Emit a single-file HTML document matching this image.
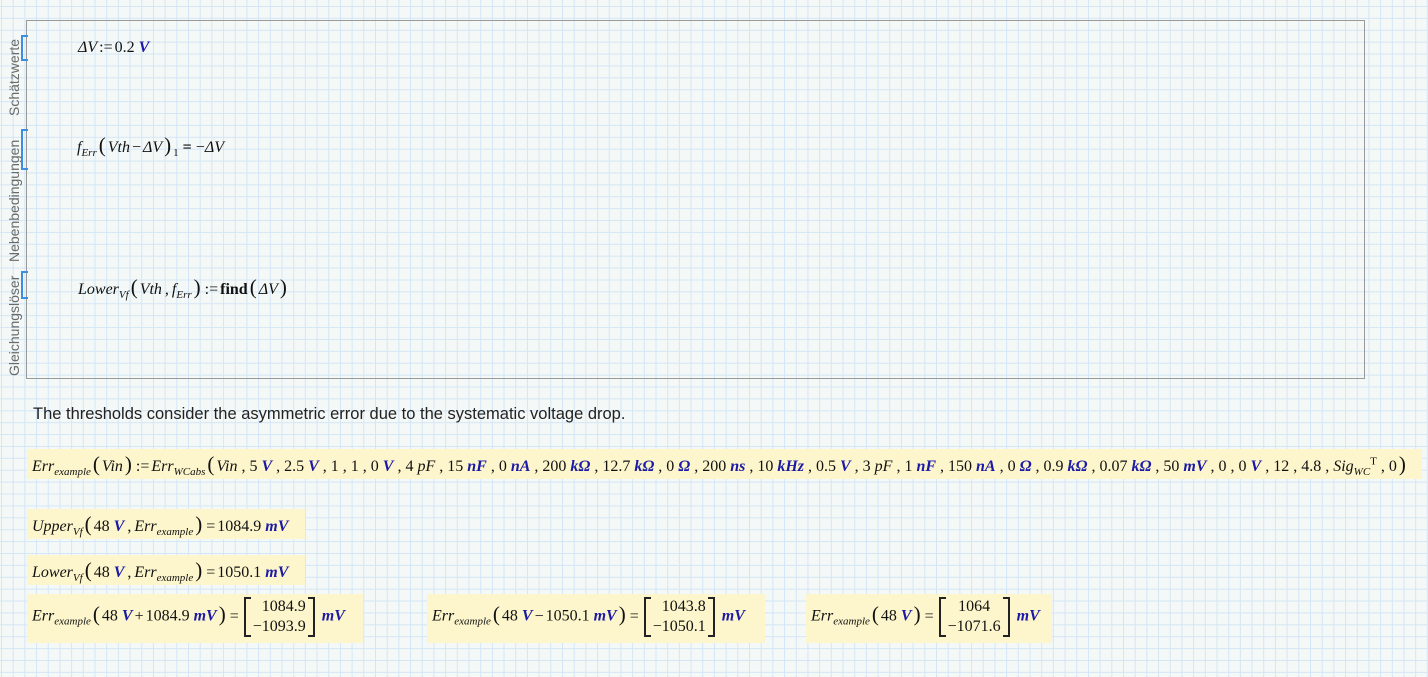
<!DOCTYPE html>
<html><head><meta charset="utf-8"><style>
body{margin:0;width:1428px;height:677px;overflow:hidden;position:relative;
background-color:#f4f8f7;
background-image:linear-gradient(to right,#d4e6f6 1px,transparent 1px),linear-gradient(to bottom,#d4e6f6 1px,transparent 1px);
background-size:11.7px 11.9px;background-position:1px 6px;
font-family:"Liberation Serif",serif;color:#111}
.a{position:absolute;white-space:nowrap}
.m{font-family:"Liberation Serif",serif;font-size:16px;font-style:italic}
.n{font-style:normal}
.c{font-style:normal;padding:0 3px}
.r1 .c{padding:0 4px}
.e{font-style:normal;padding:0 2px}
.u{color:#1a1aa6;font-weight:bold;font-style:italic}
sub{font-size:11px;vertical-align:-4px}
.y{position:absolute;background:#fdf6cc}
.lab{position:absolute;font-family:"Liberation Sans",sans-serif;font-size:14px;color:#6a6a6a;transform:rotate(-90deg);transform-origin:left top;white-space:nowrap}
.br{position:absolute;left:21px;width:5px;border:2px solid #3b8fe0;border-right:none}
.p{font-size:21px;font-style:normal;padding:0 2px}
.mat{display:inline-block;vertical-align:middle;text-align:right;font-style:normal;border-left:2px solid #222;border-right:2px solid #222;padding:0 7px;line-height:20px;position:relative;margin:0 3px}
.mat:before,.mat:after{content:"";position:absolute;top:0;bottom:0;width:5px;border-top:2px solid #222;border-bottom:2px solid #222}
.mat:before{left:0}.mat:after{right:0}
</style></head><body>
<div class="a" style="left:26px;top:20px;width:1337px;height:357px;border:1px solid #9a9a9a"></div>
<div class="lab" style="left:6px;top:116px">Schätzwerte</div>
<div class="lab" style="left:6px;top:262px">Nebenbedingungen</div>
<div class="lab" style="left:6px;top:376px">Gleichungslöser</div>
<div class="br" style="top:35px;height:22px"></div>
<div class="br" style="top:129px;height:37px"></div>
<div class="br" style="top:271px;height:24px"></div>

<div class="a m" style="left:78px;top:39px">ΔV<span class="e">:=</span><span class="n">0.2</span> <span class="u">V</span></div>
<div class="a m" style="left:77px;top:133px">f<sub>Err</sub><span class="p">(</span>Vth<span class="e">−</span>ΔV<span class="p">)</span><sub class="n">1</sub> <b class="n">=</b> <span class="n">−</span>ΔV</div>
<div class="a m" style="left:78px;top:275px">Lower<sub>Vf</sub><span class="p">(</span>Vth<span class="c">,</span>f<sub>Err</sub><span class="p">)</span><span class="e">:=</span><b class="n">find</b><span class="p">(</span>ΔV<span class="p">)</span></div>

<div class="a" style="left:33px;top:405px;font-family:'Liberation Sans',sans-serif;font-size:16.5px;color:#222">The thresholds consider the asymmetric error due to the systematic voltage drop.</div>

<div class="y" style="left:27px;top:449px;width:1395px;height:30px"></div>
<div class="a m r1" style="left:32px;top:452px">Err<sub>example</sub><span class="p">(</span>Vin<span class="p">)</span><span class="e">:=</span>Err<sub>WCabs</sub><span class="p">(</span>Vin<span class="c">,</span><span class="n">5 </span><span class="u">V</span><span class="c">,</span><span class="n">2.5 </span><span class="u">V</span><span class="c">,</span><span class="n">1</span><span class="c">,</span><span class="n">1</span><span class="c">,</span><span class="n">0 </span><span class="u">V</span><span class="c">,</span><span class="n">4 </span>pF<span class="c">,</span><span class="n">15 </span><span class="u">nF</span><span class="c">,</span><span class="n">0 </span><span class="u">nA</span><span class="c">,</span><span class="n">200 </span><span class="u">kΩ</span><span class="c">,</span><span class="n">12.7 </span><span class="u">kΩ</span><span class="c">,</span><span class="n">0 </span><span class="u">Ω</span><span class="c">,</span><span class="n">200 </span><span class="u">ns</span><span class="c">,</span><span class="n">10 </span><span class="u">kHz</span><span class="c">,</span><span class="n">0.5 </span><span class="u">V</span><span class="c">,</span><span class="n">3 </span>pF<span class="c">,</span><span class="n">1 </span><span class="u">nF</span><span class="c">,</span><span class="n">150 </span><span class="u">nA</span><span class="c">,</span><span class="n">0 </span><span class="u">Ω</span><span class="c">,</span><span class="n">0.9 </span><span class="u">kΩ</span><span class="c">,</span><span class="n">0.07 </span><span class="u">kΩ</span><span class="c">,</span><span class="n">50 </span><span class="u">mV</span><span class="c">,</span><span class="n">0</span><span class="c">,</span><span class="n">0 </span><span class="u">V</span><span class="c">,</span><span class="n">12</span><span class="c">,</span><span class="n">4.8</span><span class="c">,</span>Sig<sub>WC</sub><sup class="n" style="font-size:11px">T</sup><span class="c">,</span><span class="n">0</span><span class="p">)</span></div>

<div class="y" style="left:27px;top:509px;width:278px;height:30px"></div>
<div class="a m" style="left:32px;top:512px">Upper<sub>Vf</sub><span class="p">(</span><span class="n">48 </span><span class="u">V</span><span class="c">,</span>Err<sub>example</sub><span class="p">)</span><span class="e">=</span><span class="n">1084.9</span> <span class="u">mV</span></div>
<div class="y" style="left:27px;top:555px;width:278px;height:30px"></div>
<div class="a m" style="left:32px;top:558px">Lower<sub>Vf</sub><span class="p">(</span><span class="n">48 </span><span class="u">V</span><span class="c">,</span>Err<sub>example</sub><span class="p">)</span><span class="e">=</span><span class="n">1050.1</span> <span class="u">mV</span></div>

<div class="y" style="left:27px;top:594px;width:336px;height:49px"></div>
<div class="a m" style="left:32px;top:597px">Err<sub>example</sub><span class="p">(</span><span class="n">48 </span><span class="u">V</span><span class="e">+</span><span class="n">1084.9 </span><span class="u">mV</span><span class="p">)</span><span class="e">=</span><span class="mat">1084.9<br>−1093.9</span> <span class="u">mV</span></div>
<div class="y" style="left:427px;top:594px;width:338px;height:49px"></div>
<div class="a m" style="left:432px;top:597px">Err<sub>example</sub><span class="p">(</span><span class="n">48 </span><span class="u">V</span><span class="e">−</span><span class="n">1050.1 </span><span class="u">mV</span><span class="p">)</span><span class="e">=</span><span class="mat">1043.8<br>−1050.1</span> <span class="u">mV</span></div>
<div class="y" style="left:806px;top:594px;width:246px;height:49px"></div>
<div class="a m" style="left:811px;top:597px">Err<sub>example</sub><span class="p">(</span><span class="n">48 </span><span class="u">V</span><span class="p">)</span><span class="e">=</span><span class="mat" style="text-align:center">1064<br>−1071.6</span> <span class="u">mV</span></div>
</body></html>
